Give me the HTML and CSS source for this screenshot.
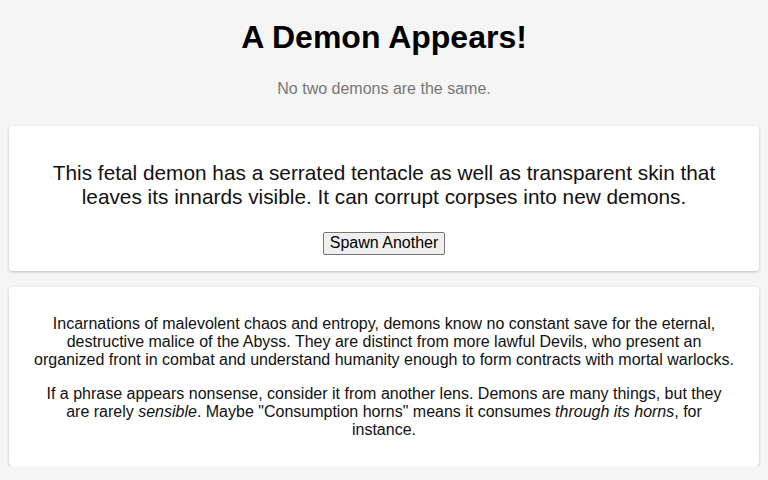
FILE: index.html
```html
<!DOCTYPE html>
<html>
<head>
<meta charset="utf-8">
<link rel="stylesheet" href="styles.css">
</head>
<body>
<header class="header">
  <h1 class="title">A Demon Appears!</h1>
  <p class="subtitle">No two demons are the same.</p>
</header>
<main class="main">
  <section class="card card-demon">
    <p class="demon-text">This fetal demon has a serrated tentacle as well as transparent skin that leaves its innards visible. It can corrupt corpses into new demons.</p>
    <button class="spawn">Spawn Another</button>
  </section>
  <section class="card card-info">
    <p class="info">Incarnations of malevolent chaos and entropy, demons know no constant save for the eternal, destructive malice of the Abyss. They are distinct from more lawful Devils, who present an organized front in combat and understand humanity enough to form contracts with mortal warlocks.</p>
    <p class="info">If a phrase appears nonsense, consider it from another lens. Demons are many things, but they are rarely <em>sensible</em>. Maybe "Consumption horns" means it consumes <em>through its horns</em>, for instance.</p>
  </section>
</main>
</body>
</html>
```
FILE: styles.css
```css
html, body {
  margin: 0;
  padding: 0;
}
body {
  background: #f5f5f5;
  font-family: "Liberation Sans", Arial, sans-serif;
  color: #111;
}
.header {
  text-align: center;
  padding-top: 19px;
}
.title {
  margin: 0;
  font-size: 32px;
  line-height: 37px;
  font-weight: bold;
  color: #000;
}
.subtitle {
  margin: 24px 0 0;
  font-size: 16px;
  line-height: 18px;
  color: #777;
}
.main {
  display: flex;
  flex-direction: column;
  gap: 16px;
  padding: 28px 9px 0;
}
.card {
  background: #fff;
  border-radius: 4px;
  box-shadow: 0 1px 3px rgba(0,0,0,0.22);
  padding: 0 24px;
  text-align: center;
}
.card-demon {
  padding-top: 35px;
  padding-bottom: 16px;
}
.demon-text {
  margin: 0 0 23px;
  font-size: 20.8px;
  line-height: 24px;
  color: #111;
}
.spawn {
  font-family: "Liberation Sans", Arial, sans-serif;
  font-size: 16px;
  line-height: 18px;
  padding: 1px 6px 2px;
  border: 1px solid #767676;
  border-radius: 2px;
  background: #efefef;
  color: #000;
}
.card-info {
  padding-top: 28px;
  padding-bottom: 27px;
}
.info {
  margin: 0 0 16px;
  font-size: 16px;
  line-height: 18px;
  color: #111;
}
.info:last-child {
  margin-bottom: 0;
}
```
